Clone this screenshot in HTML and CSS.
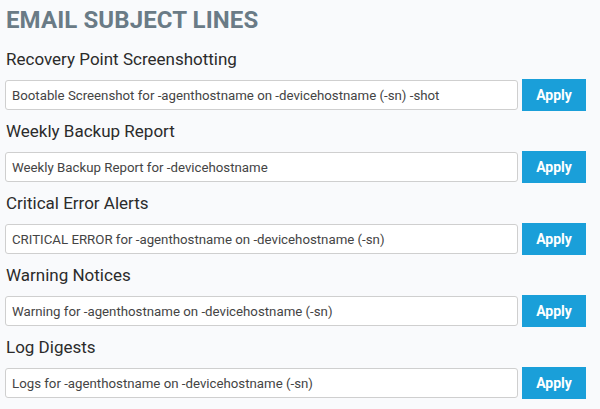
FILE: index.html
```html
<!DOCTYPE html>
<html>
<head>
<meta charset="utf-8">
<link rel="stylesheet" href="styles.css">
</head>
<body>
<div class="panel">
  <h1 class="title">EMAIL SUBJECT LINES</h1>
  <div class="field">
    <div class="label">Recovery Point Screenshotting</div>
    <div class="row">
      <input class="input" type="text" value="Bootable Screenshot for -agenthostname on -devicehostname (-sn) -shot">
      <button class="apply">Apply</button>
    </div>
  </div>
  <div class="field">
    <div class="label">Weekly Backup Report</div>
    <div class="row">
      <input class="input" type="text" value="Weekly Backup Report for -devicehostname">
      <button class="apply">Apply</button>
    </div>
  </div>
  <div class="field">
    <div class="label">Critical Error Alerts</div>
    <div class="row">
      <input class="input" type="text" value="CRITICAL ERROR for -agenthostname on -devicehostname (-sn)">
      <button class="apply">Apply</button>
    </div>
  </div>
  <div class="field">
    <div class="label">Warning Notices</div>
    <div class="row">
      <input class="input" type="text" value="Warning for -agenthostname on -devicehostname (-sn)">
      <button class="apply">Apply</button>
    </div>
  </div>
  <div class="field">
    <div class="label">Log Digests</div>
    <div class="row">
      <input class="input" type="text" value="Logs for -agenthostname on -devicehostname (-sn)">
      <button class="apply">Apply</button>
    </div>
  </div>
</div>
</body>
</html>
```
FILE: styles.css
```css
html, body {
  margin: 0;
  padding: 0;
  background: #f9fafc;
}
.panel {
  padding: 6px 14px 0 5px;
  font-family: "Roboto", "Liberation Sans", sans-serif;
}
.title {
  margin: 0 0 13px 1px;
  font-size: 24px;
  line-height: 28px;
  font-weight: 700;
  color: #6a7b86;
  letter-spacing: 0.1px;
}
.field {
  display: flex;
  flex-direction: column;
}
.label {
  margin: 0 0 8px 1px;
  font-size: 17px;
  line-height: 24px;
  color: #2b2b2b;
}
.row {
  display: flex;
  align-items: center;
  gap: 4px;
  margin-bottom: 8px;
}
.input {
  flex: 1;
  height: 30px;
  box-sizing: border-box;
  border: 1px solid #cfcfcf;
  border-radius: 3px;
  background: #fff;
  padding: 0 6px;
  font-family: "Roboto", "Liberation Sans", sans-serif;
  font-size: 13.25px;
  color: #444;
  outline: none;
}
.apply {
  width: 64px;
  height: 32px;
  border: none;
  border-radius: 0;
  background: #1a9fd9;
  color: #fff;
  font-family: "Roboto", "Liberation Sans", sans-serif;
  font-size: 14px;
  font-weight: 700;
  padding: 0;
}
```
